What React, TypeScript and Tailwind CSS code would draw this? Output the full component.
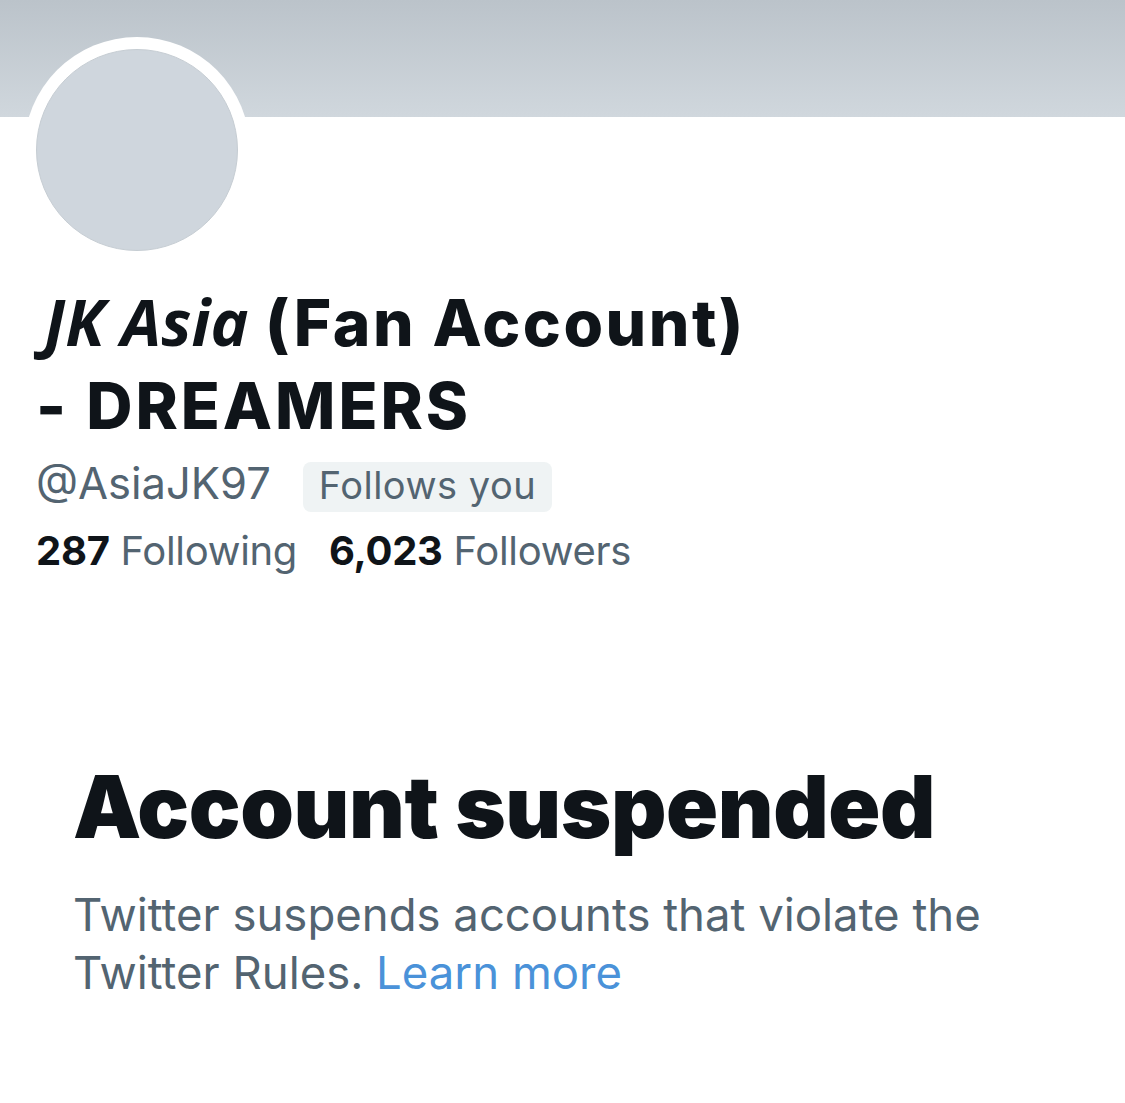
export default function App() {
  return (
    <div className="min-h-screen bg-white font-['Inter',sans-serif] text-[#0f1419]">
      {/* banner */}
      <div className="h-[117px] bg-gradient-to-b from-[#bbc3ca] to-[#d0d7dd]" />

      <div className="px-[36px]">
        {/* avatar */}
        <div className="-mt-[80px] -ml-[12px] w-[226px] h-[226px] rounded-full bg-white p-[12px]">
          <div className="w-full h-full rounded-full bg-[#cfd6dd] border border-[#c6cdd3]" />
        </div>

        {/* name */}
        <h1 className="mt-[17px] text-[64px] leading-[83px] font-extrabold tracking-[2.5px]">
          <span className="ml-[8px] font-['Open_Sans',sans-serif] italic font-bold tracking-normal">
            JK Asia
          </span>{" "}
          (Fan Account)
          <br />
          <span className="tracking-[3px]">- DREAMERS</span>
        </h1>

        {/* handle */}
        <div className="mt-[11px] flex items-start gap-8">
          <span className="text-[43.5px] leading-[50px] text-[#536471]">
            @AsiaJK97
          </span>
          <span className="mt-[4px] h-[50px] px-4 rounded-lg bg-[#eff3f4] text-[38px] leading-[46px] tracking-[0.5px] text-[#536471]">
            Follows you
          </span>
        </div>

        {/* follow counts */}
        <div className="mt-[14px] flex gap-8 text-[40px] leading-[50px] tracking-[-0.3px]">
          <span>
            <span className="font-bold">287</span>{" "}
            <span className="text-[#536471]">Following</span>
          </span>
          <span>
            <span className="font-bold">6,023</span>{" "}
            <span className="text-[#536471]">Followers</span>
          </span>
        </div>
      </div>

      {/* suspended notice */}
      <div className="mt-[181px] px-[73px]">
        <h2 className="text-[86px] leading-[100px] font-black tracking-[-0.4px]">
          Account suspended
        </h2>
        <p className="mt-[29px] text-[45.5px] leading-[58px] text-[#536471]">
          <span>Twitter suspends accounts that violate the Twitter Rules.</span>{" "}
          <span className="text-[#4a92d9]">Learn more</span>
        </p>
      </div>
    </div>
  );
}
